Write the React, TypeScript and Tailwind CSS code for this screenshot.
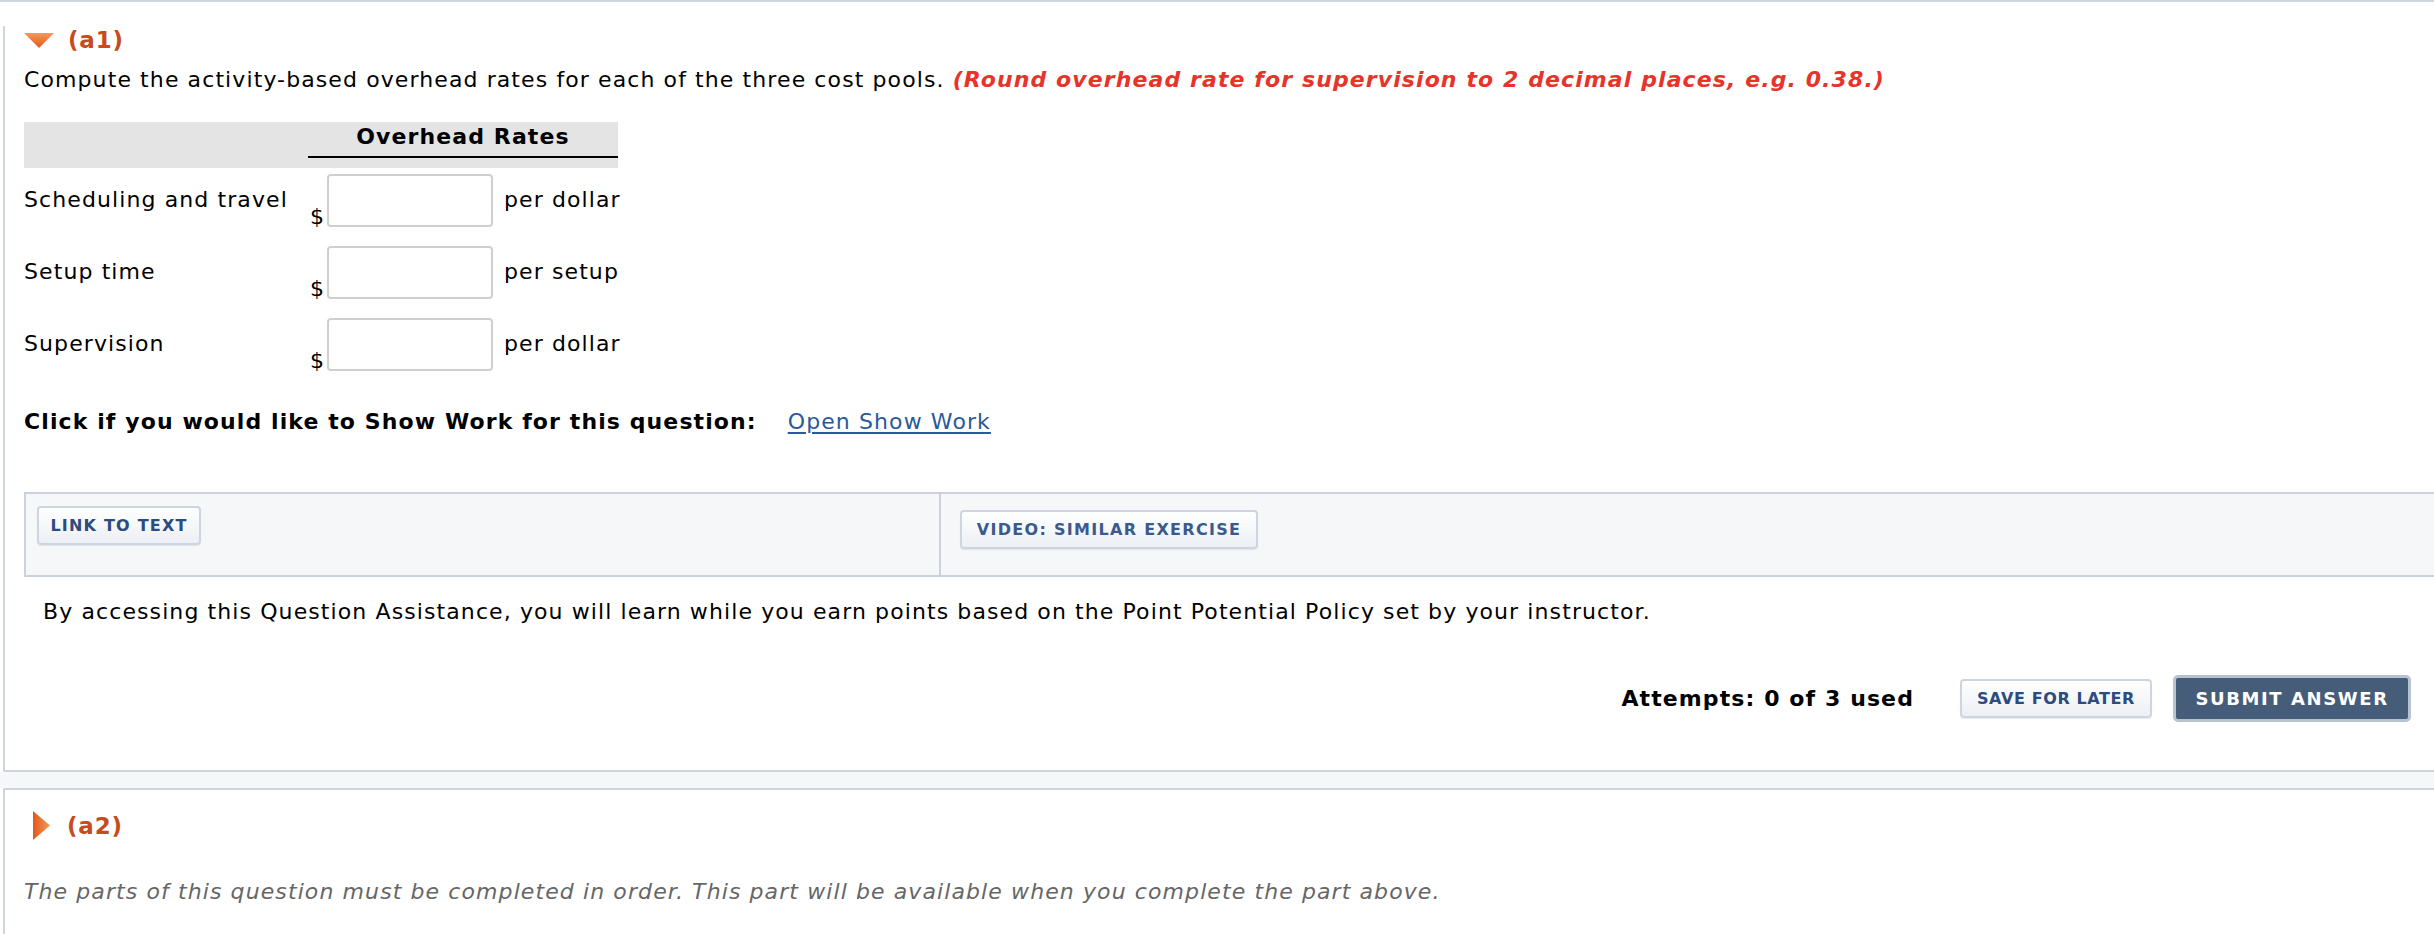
import React from 'react';

const rows = [
  { label: 'Scheduling and travel', unit: 'per dollar' },
  { label: 'Setup time', unit: 'per setup' },
  { label: 'Supervision', unit: 'per dollar' },
];

function TriangleDown() {
  return (
    <svg width="30" height="15" viewBox="0 0 30 15" className="block">
      <defs>
        <linearGradient id="tri-down" x1="0" y1="0" x2="0" y2="1">
          <stop offset="0" stopColor="#f39a5c" />
          <stop offset="1" stopColor="#e2581c" />
        </linearGradient>
      </defs>
      <polygon points="0,0 30,0 15,15" fill="url(#tri-down)" />
    </svg>
  );
}

function TriangleRight() {
  return (
    <svg width="17" height="29" viewBox="0 0 17 29" className="block">
      <defs>
        <linearGradient id="tri-right" x1="0" y1="0" x2="1" y2="0">
          <stop offset="0" stopColor="#e2581c" />
          <stop offset="1" stopColor="#f39a5c" />
        </linearGradient>
      </defs>
      <polygon points="0,0 17,14.5 0,29" fill="url(#tri-right)" />
    </svg>
  );
}

const lightBtn =
  'h-[39px] whitespace-nowrap rounded-[4px] border-2 border-[#cdd5e0] bg-gradient-to-b from-white to-[#eceff4] font-bold uppercase text-[#2c4b7f] shadow-[0_1px_1px_rgba(0,0,0,0.08)]';

export default function App() {
  return (
    <div className="min-h-screen w-full overflow-hidden bg-white font-['DejaVu_Sans',Verdana,sans-serif] text-[22px] leading-[28px] tracking-[1.1px] text-black">
      <div className="border-t-2 border-[#cfd5df]">
        {/* ── Part (a1) ── */}
        <div className="ml-[3px] border-b-2 border-l-2 border-[#cfd5df] pb-[48px]">
          <div className="mt-[24px] flex h-[28px] items-center pl-[19px]">
            <TriangleDown />
            <span className="ml-[14px] text-[23px] font-bold tracking-[0.8px] text-[#c64b1d]">(a1)</span>
          </div>

          <p className="mt-[12px] pl-[19px]">
            Compute the activity-based overhead rates for each of the three cost pools.{' '}
            <span className="font-bold italic text-[#e8332a]">
              (Round overhead rate for supervision to 2 decimal places, e.g. 0.38.)
            </span>
          </p>

          <div className="ml-[19px] mt-[28px] w-[594px]">
            <div className="flex h-[46px] bg-[#e4e4e4]">
              <div className="w-[284px]" />
              <div className="flex h-[36px] flex-1 justify-center border-b-2 border-black pt-[1px]">
                <span className="font-bold">Overhead Rates</span>
              </div>
            </div>

            <div className="mt-[6px] flex flex-col gap-[19px]">
              {rows.map(r => (
                <div key={r.label} className="flex h-[53px] whitespace-nowrap">
                  <div className="w-[286px] shrink-0 pt-[12px]">{r.label}</div>
                  <div className="w-[17px] shrink-0 self-end leading-[20px] tracking-normal">$</div>
                  <div className="h-[53px] w-[166px] shrink-0 rounded-[4px] border-2 border-[#cfcfcf] bg-white" />
                  <div className="pl-[11px] pt-[12px]">{r.unit}</div>
                </div>
              ))}
            </div>
          </div>

          <div className="mt-[37px] flex pl-[19px]">
            <span className="font-bold">Click if you would like to Show Work for this question:</span>
            <a href="#" className="ml-[31px] text-[#2a5a99] underline underline-offset-[3px]">
              Open Show Work
            </a>
          </div>

          {/* ── Question assistance ── */}
          <div className="ml-[19px] mt-[56px] flex h-[85px] border-y-2 border-l-2 border-[#cbd2dd] bg-[#f6f7f9]">
            <div className="w-[915px] border-r-2 border-[#cbd2dd] pl-[11px] pt-[12px]">
              <button className={`${lightBtn} w-[164px] text-[16px] tracking-[1.2px]`}>Link to text</button>
            </div>
            <div className="pl-[19px] pt-[16px]">
              <button className={`${lightBtn} w-[298px] text-[16px] tracking-[1.3px] text-[#3b5a8c]`}>
                Video: Similar Exercise
              </button>
            </div>
          </div>

          <p className="mt-[21px] pl-[38px]">
            By accessing this Question Assistance, you will learn while you earn points based on the Point Potential Policy set by your instructor.
          </p>

          <div className="mt-[49px] flex items-center justify-end pr-[23px]">
            <span className="font-bold">Attempts: 0 of 3 used</span>
            <button className={`${lightBtn} ml-[46px] w-[192px] text-[16px] tracking-[0.6px]`}>Save for later</button>
            <button className="ml-[21px] h-[47px] w-[238px] rounded-[5px] border-[3px] border-[#b9c3d0] bg-[#465d79] text-[18px] font-bold uppercase tracking-[1.6px] text-white">
              Submit answer
            </button>
          </div>
        </div>

        <div className="h-[16px] bg-[#f6f7f9]" />

        {/* ── Part (a2) ── */}
        <div className="ml-[3px] h-[200px] border-l-2 border-t-2 border-[#cfd5df]">
          <div className="mt-[21px] flex h-[29px] items-center pl-[28px]">
            <TriangleRight />
            <span className="ml-[17px] text-[23px] font-bold tracking-[0.8px] text-[#c64b1d]">(a2)</span>
          </div>
          <p className="mt-[38px] pl-[19px] italic text-[#666666]">
            The parts of this question must be completed in order. This part will be available when you complete the part above.
          </p>
        </div>
      </div>
    </div>
  );
}
